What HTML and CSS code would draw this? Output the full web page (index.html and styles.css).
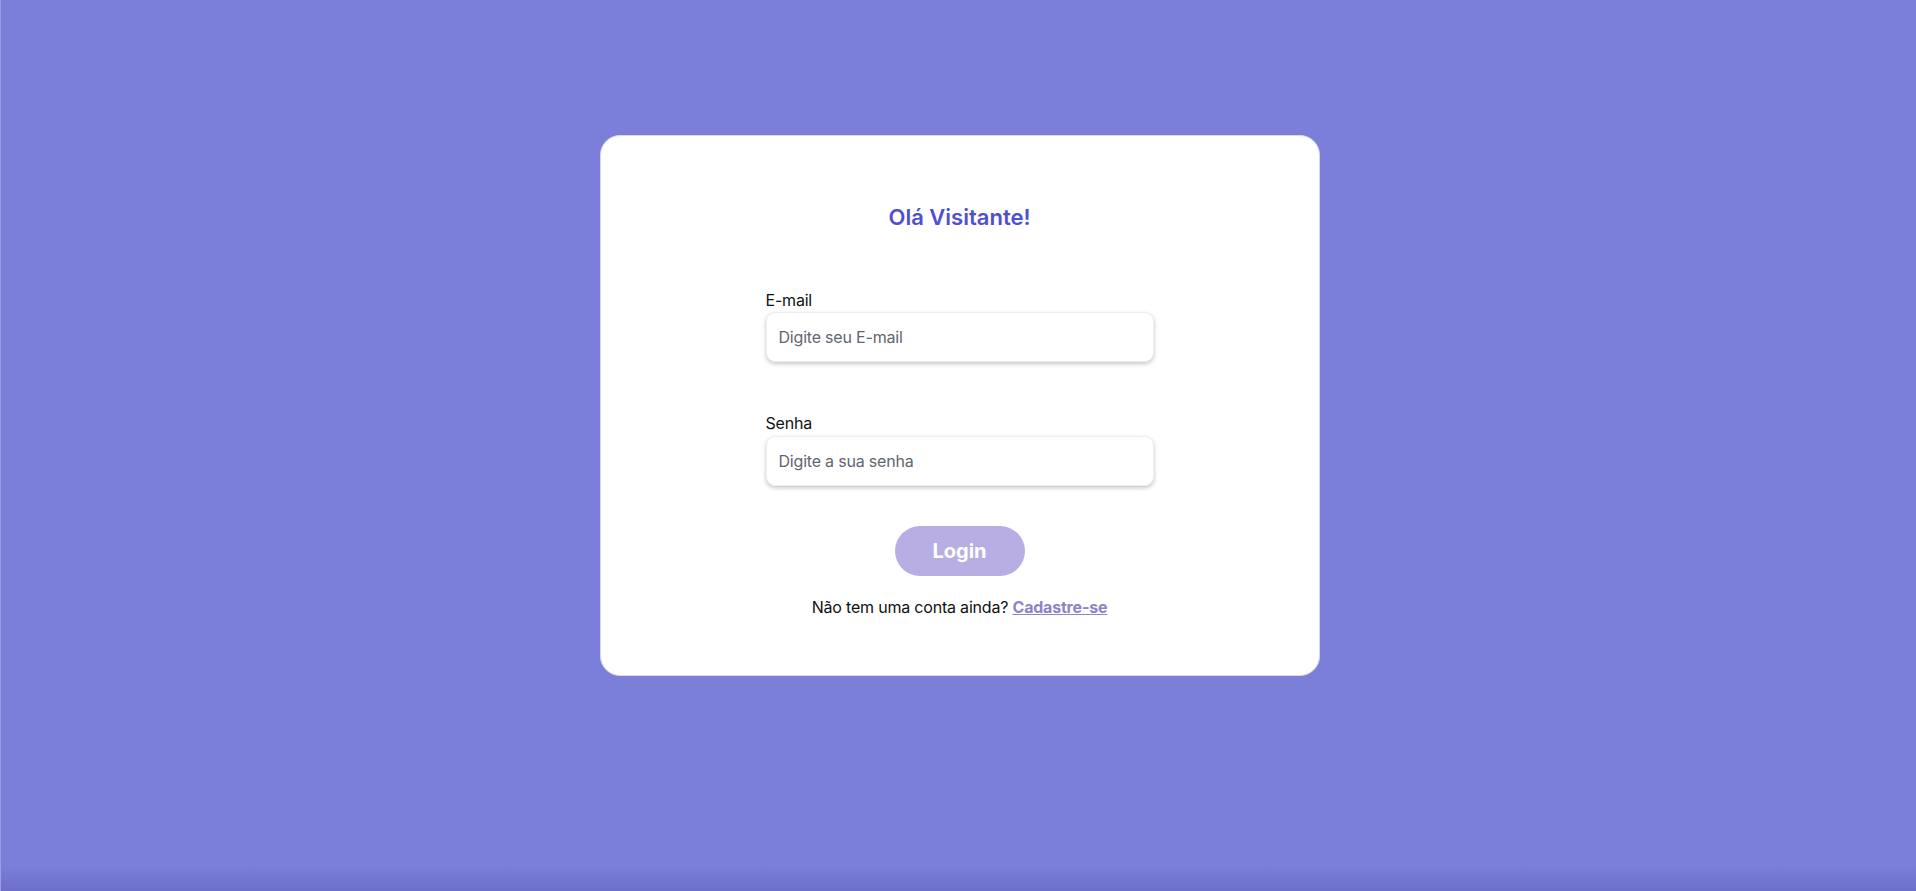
FILE: index.html
```html
<!DOCTYPE html>
<html lang="pt-BR">
<head>
<meta charset="utf-8">
<title>Login</title>
<link rel="stylesheet" href="styles.css">
</head>
<body>
<main class="page">
  <section class="card">
    <h1 class="title">Olá Visitante!</h1>
    <form class="form">
      <div class="field">
        <label class="label" for="email">E-mail</label>
        <input class="input" id="email" type="email" placeholder="Digite seu E-mail">
      </div>
      <div class="field field-second">
        <label class="label" for="senha">Senha</label>
        <input class="input" id="senha" type="password" placeholder="Digite a sua senha">
      </div>
      <button class="btn" type="button">Login</button>
      <p class="signup">Não tem uma conta ainda? <a class="link" href="#">Cadastre-se</a></p>
    </form>
  </section>
</main>
</body>
</html>
```

FILE: styles.css
```css
* { box-sizing: border-box; }
html, body { margin: 0; padding: 0; }
body {
  min-height: 100vh;
  font-family: Inter, "Noto Sans", "Liberation Sans", sans-serif;
  letter-spacing: -0.2px;
  color: #111;
  background:
    linear-gradient(to bottom, rgba(60, 60, 140, 0) 0, rgba(60, 60, 140, 0) calc(100% - 26px), rgba(80, 80, 170, 0.35) 100%),
    #7c7fda;
  border-left: 1px solid #9a9de6;
}
.page {
  min-height: 100vh;
  display: flex;
  justify-content: center;
  align-items: flex-start;
  padding-top: 135px;
  padding-left: 2px;
}
.card {
  width: 720px;
  height: 541px;
  background: #fff;
  border: 1px solid #d9d9e6;
  border-radius: 20px;
  padding-top: 66px;
  display: flex;
  flex-direction: column;
  align-items: center;
}
.title {
  margin: 0;
  font-size: 22px;
  line-height: 30px;
  font-weight: 600;
  letter-spacing: 0;
  color: #4f4fd3;
}
.form {
  width: 388px;
  margin-top: 58px;
  display: flex;
  flex-direction: column;
}
.field { display: flex; flex-direction: column; }
.field-second { margin-top: 51px; }
.label {
  font-size: 16px;
  line-height: 20px;
  margin-bottom: 2px;
  color: #111;
}
.field-second .label { margin-bottom: 3px; }
.input {
  height: 50px;
  width: 100%;
  border: 1px solid #eeeeee;
  border-radius: 9px;
  padding: 0 12px;
  font-family: inherit;
  font-size: 16px;
  letter-spacing: -0.2px;
  color: #222;
  background: #fff;
  box-shadow: 0 2px 4px rgba(0, 0, 0, 0.22);
  outline: none;
}
.input::placeholder { color: #5f6670; }
.btn {
  align-self: center;
  margin-top: 40px;
  width: 130px;
  height: 50px;
  border: none;
  border-radius: 25px;
  background: #b8aee3;
  color: #fff;
  font-family: inherit;
  font-size: 20px;
  font-weight: 700;
  letter-spacing: 0;
  cursor: pointer;
}
.signup {
  margin: 21px 0 0;
  text-align: center;
  font-size: 16px;
  line-height: 20px;
  color: #111;
}
.link {
  color: #8e83c6;
  font-weight: 700;
  text-decoration: underline;
}
```
